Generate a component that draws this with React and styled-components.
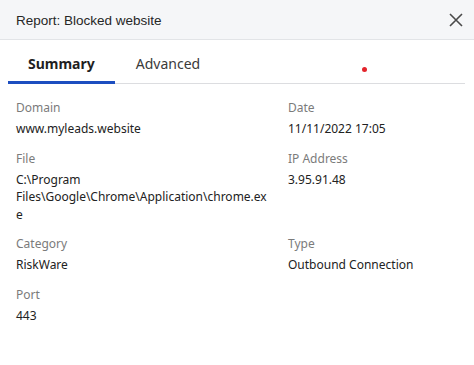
import React from "react";
import styled, { createGlobalStyle, css } from "styled-components";

const GlobalStyle = createGlobalStyle`
  body {
    margin: 0;
    background: #ffffff;
    font-family: "Noto Sans", "Open Sans", sans-serif;
  }
`;

const fields = [
  { label: "Domain", value: "www.myleads.website" },
  { label: "Date", value: "11/11/2022 17:05" },
  { label: "File", value: "C:\\Program Files\\Google\\Chrome\\Application\\chrome.exe" },
  { label: "IP Address", value: "3.95.91.48" },
  { label: "Category", value: "RiskWare" },
  { label: "Type", value: "Outbound Connection" },
  { label: "Port", value: "443" },
];

const App = () => {
  return (
    <>
      <GlobalStyle />
      <Dialog>
        <Header>
          <Title>Report: Blocked website</Title>
          <CloseButton aria-label="Close">
            <svg width="14" height="14" viewBox="0 0 14 14">
              <path d="M1 1 L13 13 M13 1 L1 13" stroke="#4a4a4a" strokeWidth="1.6" fill="none" />
            </svg>
          </CloseButton>
        </Header>

        <Tabs>
          <Tab active>Summary</Tab>
          <Tab>Advanced</Tab>
          <Dot />
        </Tabs>

        <Details>
          {fields.map((f) => (
            <Field key={f.label}>
              <Label>{f.label}</Label>
              <Value>{f.value}</Value>
            </Field>
          ))}
        </Details>
      </Dialog>
    </>
  );
};

const Dialog = styled.div`
  width: 474px;
  height: 365px;
  background: #fff;
`;

const Header = styled.div`
  height: 39px;
  background: #f5f6f8;
  border-bottom: 1px solid #e2e4e7;
  display: flex;
  align-items: center;
  justify-content: space-between;
  padding: 0 9px 0 16px;
`;

const Title = styled.div`
  font-family: "Liberation Sans", "Noto Sans", sans-serif;
  font-size: 13.5px;
  padding-top: 1px;
  color: #262626;
`;

const CloseButton = styled.button`
  border: none;
  background: none;
  padding: 0;
  width: 18px;
  height: 18px;
  display: flex;
  align-items: center;
  justify-content: center;
`;

const Tabs = styled.div`
  position: relative;
  margin: 6px 9px 0 8px;
  height: 37px;
  border-bottom: 1px solid #dcdde0;
  display: flex;
`;

const Tab = styled.div`
  padding: 0 21px 0 21px;
  display: flex;
  align-items: center;
  font-size: 14px;
  color: #3a3a3a;
  border-bottom: 3px solid transparent;
  margin-bottom: -1px;

  ${(props) =>
    props.active &&
    css`
      padding: 0 20px;
      font-weight: 700;
      color: #1f1f1f;
      border-bottom-color: #1d4ec0;
    `}
`;

const Dot = styled.span`
  position: absolute;
  left: 354px;
  top: 21px;
  width: 5px;
  height: 5px;
  border-radius: 50%;
  background: #e3242b;
`;

const Details = styled.div`
  display: grid;
  grid-template-columns: 253px 1fr;
  column-gap: 19px;
  row-gap: 12px;
  padding: 15px 16px 0 16px;
`;

const Field = styled.div`
  display: flex;
  flex-direction: column;
  gap: 3px;
`;

const Label = styled.div`
  font-size: 12px;
  line-height: 18px;
  color: #7b7b7b;
`;

const Value = styled.div`
  font-size: 12px;
  line-height: 17.5px;
  color: #222;
  overflow-wrap: anywhere;
`;

export default App;
